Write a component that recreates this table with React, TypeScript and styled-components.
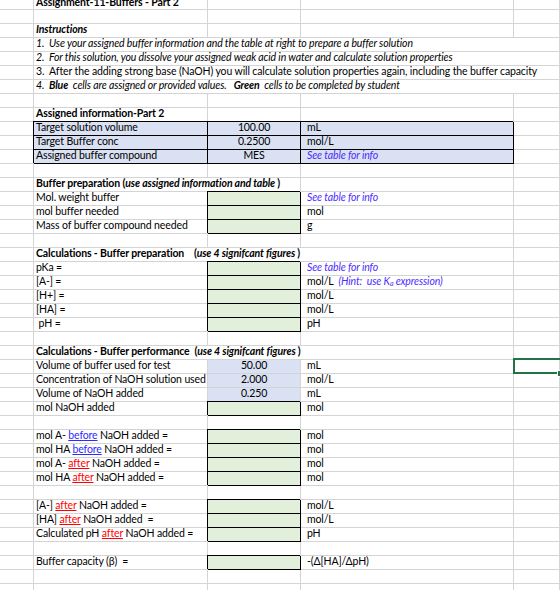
import React from 'react';
import styled, { createGlobalStyle } from 'styled-components';

const GRID = '#d4d4d4';
const BLUE_FILL = '#d9e1f2';
const GREEN_FILL = '#e2efda';
const NOTE = '#4b2cff';

const Global = createGlobalStyle`
  html, body { margin: 0; padding: 0; background: #fff; }
  body { font-family: Lato, 'Open Sans', sans-serif; }
`;

const Sheet = styled.div`
  display: grid;
  grid-template-columns: 34px 174px 93px 213px 46px;
  grid-template-rows: 10px;
  grid-auto-rows: 14px;
  width: 560px;
  height: 590px;
  overflow: hidden;
  font-family: Lato, 'Open Sans', sans-serif;
  font-size: 10.5px;
  letter-spacing: -0.12px;
  color: #000;
`;

type Fill = 'none' | 'blue' | 'green';

const Cell = styled.div<{
  $span?: number;
  $fill?: Fill;
  $boxed?: boolean;
  $center?: boolean;
  $indent?: number;
  $clip?: boolean;
  $bold?: boolean;
  $italic?: boolean;
  $lh?: number;
}>`
  grid-column: span ${p => p.$span ?? 1};
  box-sizing: border-box;
  min-width: 0;
  padding-left: ${p => (p.$center ? 0 : p.$indent ?? 2)}px;
  text-align: ${p => (p.$center ? 'center' : 'left')};
  line-height: ${p => p.$lh ?? 11}px;
  white-space: pre;
  overflow: ${p => (p.$clip ? 'hidden' : 'visible')};
  font-weight: ${p => (p.$bold ? 700 : 400)};
  font-style: ${p => (p.$italic ? 'italic' : 'normal')};
  background: ${p =>
    p.$fill === 'blue' ? BLUE_FILL : p.$fill === 'green' ? GREEN_FILL : 'transparent'};
  border-right: 1px solid ${p => (p.$boxed ? '#000' : GRID)};
  border-bottom: 1px solid ${p => (p.$boxed ? '#000' : GRID)};
  box-shadow: ${p => (p.$boxed ? '-1px -1px 0 0 #000' : 'none')};
`;

const Selected = styled(Cell)`
  position: relative;
  &::after {
    content: '';
    position: absolute;
    top: -2px;
    left: -1px;
    width: 60px;
    height: 16px;
    box-sizing: border-box;
    border: 2px solid #217346;
  }
  &::before {
    content: '';
    position: absolute;
    left: 43px;
    top: 10px;
    width: 5px;
    height: 5px;
    background: #217346;
    border: 1px solid #fff;
    z-index: 1;
  }
`;

const Note = styled.span`
  color: ${NOTE};
  font-style: italic;
`;

const Strong = styled.span<{ $italic?: boolean }>`
  font-weight: 700;
  font-style: ${p => (p.$italic ? 'italic' : 'normal')};
`;

const Link = styled.span<{ $tone: 'blue' | 'red' }>`
  color: ${p => (p.$tone === 'red' ? '#ff0000' : '#2f2bff')};
  text-decoration: underline;
`;

const Sub = styled.sub`
  font-size: 7px;
  vertical-align: -1px;
  line-height: 0;
`;

const Empty = () => (
  <>
    <Cell />
    <Cell />
    <Cell />
    <Cell />
    <Cell />
  </>
);

type LineProps = {
  label: React.ReactNode;
  value?: React.ReactNode;
  unit?: React.ReactNode;
  fill?: Fill;
  boxed?: boolean;
};

const Line = ({ label, value, unit, fill = 'green', boxed = true }: LineProps) => (
  <>
    <Cell />
    <Cell>{label}</Cell>
    <Cell $fill={fill} $boxed={boxed} $center>
      {value}
    </Cell>
    <Cell $indent={6}>{unit}</Cell>
    <Cell />
  </>
);

const Heading = ({ span, children }: { span: number; children: React.ReactNode }) => (
  <>
    <Cell />
    <Cell $span={span} $bold>
      {children}
    </Cell>
    {Array.from({ length: 4 - span }).map((_, i) => (
      <Cell key={i} />
    ))}
  </>
);

const Instruction = ({ children, italic }: { children: React.ReactNode; italic?: boolean }) => (
  <>
    <Cell />
    <Cell $span={4} $italic={italic}>
      {children}
    </Cell>
  </>
);

const AssignedRow = ({ label, value, unit }: { label: string; value: string; unit: React.ReactNode }) => (
  <>
    <Cell />
    <Cell $fill="blue" $boxed>
      {label}
    </Cell>
    <Cell $fill="blue" $boxed $center>
      {value}
    </Cell>
    <Cell $fill="blue" $boxed $indent={6}>
      {unit}
    </Cell>
    <Cell />
  </>
);

const After = () => <Link $tone="red">after</Link>;
const Before = () => <Link $tone="blue">before</Link>;

export default function App() {
  return (
    <>
      <Global />
      <Sheet>
        {/* row 0 */}
        <Cell />
        <Cell $bold $clip $lh={4}>
          Assignment-11-Buffers - Part 2
        </Cell>
        <Cell />
        <Cell />
        <Cell />

        <Empty />

        <Cell />
        <Cell $bold $italic>
          Instructions
        </Cell>
        <Cell />
        <Cell />
        <Cell />

        <Instruction italic>
          1.  Use your assigned buffer information and the table at right to prepare a buffer solution
        </Instruction>
        <Instruction italic>
          2.  For this solution, you dissolve your assigned weak acid in water and calculate solution properties
        </Instruction>
        <Instruction>
          3.  After the adding strong base (NaOH) you will calculate solution properties again, including the buffer capacity
        </Instruction>
        <Instruction italic>
          4.  <Strong $italic>Blue</Strong>  cells are assigned or provided values.   <Strong $italic>Green</Strong>  cells to be completed by student
        </Instruction>

        <Empty />

        <Heading span={1}>Assigned information-Part 2</Heading>
        <AssignedRow label="Target solution volume" value="100.00" unit="mL" />
        <AssignedRow label="Target Buffer conc" value="0.2500" unit="mol/L" />
        <AssignedRow label="Assigned buffer compound" value="MES" unit={<Note>See table for info</Note>} />

        <Empty />

        <Heading span={2}>
          Buffer preparation (<Strong $italic>use assigned information and table </Strong>)
        </Heading>
        <Line label="Mol. weight buffer" unit={<Note>See table for info</Note>} />
        <Line label="mol buffer needed" unit="mol" />
        <Line label="Mass of buffer compound needed" unit="g" />

        <Empty />

        <Heading span={3}>
          Calculations - Buffer preparation    (<Strong $italic>use 4 signifcant figures </Strong>)
        </Heading>
        <Line label="pKa =" unit={<Note>See table for info</Note>} />
        <Line
          label="[A-] ="
          unit={
            <>
              mol/L  <Note>
                (Hint:  use K<Sub>a</Sub> expression)
              </Note>
            </>
          }
        />
        <Line label="[H+] =" unit="mol/L" />
        <Line label="[HA] =" unit="mol/L" />
        <Line label=" pH =" unit="pH" />

        <Empty />

        <Heading span={3}>
          Calculations - Buffer performance  (<Strong $italic>use 4 signifcant figures </Strong>)
        </Heading>
        <Cell />
        <Cell>Volume of buffer used for test</Cell>
        <Cell $fill="blue" $center>
          50.00
        </Cell>
        <Cell $indent={6}>mL</Cell>
        <Selected />
        <Line label="Concentration of NaOH solution used" value="2.000" unit="mol/L" fill="blue" boxed={false} />
        <Line label="Volume of NaOH added" value="0.250" unit="mL" fill="blue" boxed={false} />
        <Line label="mol NaOH added" unit="mol" />

        <Empty />

        <Line label={<>mol A- <Before /> NaOH added =</>} unit="mol" />
        <Line label={<>mol HA <Before /> NaOH added =</>} unit="mol" />
        <Line label={<>mol A- <After /> NaOH added =</>} unit="mol" />
        <Line label={<>mol HA <After /> NaOH added =</>} unit="mol" />

        <Empty />

        <Line label={<>[A-] <After /> NaOH added =</>} unit="mol/L" />
        <Line label={<>[HA] <After /> NaOH added  =</>} unit="mol/L" />
        <Line label={<>Calculated pH <After /> NaOH added =</>} unit="pH" />

        <Empty />

        <Line label="Buffer capacity (β)  =" unit="-(Δ[HA]/ΔpH)" />

        <Empty />
        <Empty />
      </Sheet>
    </>
  );
}
